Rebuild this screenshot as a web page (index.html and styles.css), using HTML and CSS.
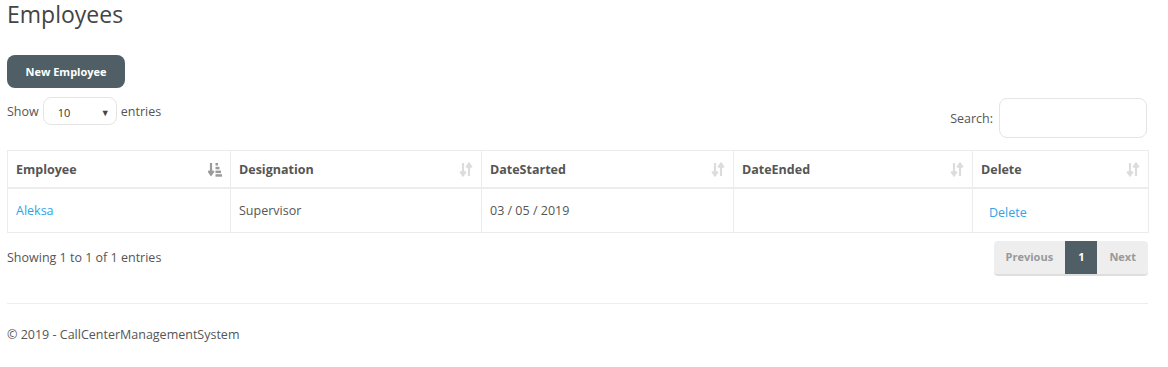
FILE: index.html
```html
<!DOCTYPE html>
<html lang="en">

<head>
    <meta charset="utf-8">
    <meta name="viewport" content="width=device-width, initial-scale=1.0">
    <title>Employees</title>
    <link rel="stylesheet" href="styles.css">
</head>

<body>
    <div class="container">
        <h2 class="title">Employees</h2>

        <p class="actions"><a class="btn" href="#">New Employee</a></p>

        <div class="toolbar">
            <label class="length">Show
                <span class="select">10 <span class="caret">&#9660;</span></span>
                entries</label>
            <label class="search">Search: <span class="input"></span></label>
        </div>

        <table class="grid">
            <thead>
                <tr>
                    <th class="c1">Employee <span class="sort on"><svg width="14" height="15" viewBox="0 0 14 15"><path d="M3 1v11M0.3 8.8L3 12.6l2.7-3.8" stroke="currentColor" stroke-width="2.2" fill="none"/><rect x="7.5" y="1" width="2.5" height="2.5"/><rect x="7.5" y="4.8" width="4" height="2.5"/><rect x="7.5" y="8.6" width="5.5" height="2.5"/><rect x="7.5" y="12.2" width="6.5" height="2.5"/></svg></span></th>
                    <th class="c2">Designation <span class="sort"><svg width="14" height="15" viewBox="0 0 14 15"><path d="M4 1v12M1.3 9.5L4 13.3l2.7-3.8M10 14V2M7.3 5.5L10 1.7l2.7 3.8" stroke="currentColor" stroke-width="2.2" fill="none"/></svg></span></th>
                    <th class="c3">DateStarted <span class="sort"><svg width="14" height="15" viewBox="0 0 14 15"><path d="M4 1v12M1.3 9.5L4 13.3l2.7-3.8M10 14V2M7.3 5.5L10 1.7l2.7 3.8" stroke="currentColor" stroke-width="2.2" fill="none"/></svg></span></th>
                    <th class="c4">DateEnded <span class="sort"><svg width="14" height="15" viewBox="0 0 14 15"><path d="M4 1v12M1.3 9.5L4 13.3l2.7-3.8M10 14V2M7.3 5.5L10 1.7l2.7 3.8" stroke="currentColor" stroke-width="2.2" fill="none"/></svg></span></th>
                    <th class="c5">Delete <span class="sort"><svg width="14" height="15" viewBox="0 0 14 15"><path d="M4 1v12M1.3 9.5L4 13.3l2.7-3.8M10 14V2M7.3 5.5L10 1.7l2.7 3.8" stroke="currentColor" stroke-width="2.2" fill="none"/></svg></span></th>
                </tr>
            </thead>
            <tbody>
                <tr>
                    <td><a href="#">Aleksa</a></td>
                    <td>Supervisor</td>
                    <td>03 / 05 / 2019</td>
                    <td></td>
                    <td class="del"><a href="#">Delete</a></td>
                </tr>
            </tbody>
        </table>

        <div class="bottom">
            <div class="info">Showing 1 to 1 of 1 entries</div>
            <ul class="pager">
                <li>Previous</li>
                <li class="active">1</li>
                <li>Next</li>
            </ul>
        </div>

        <hr>
        <footer>
            <p>&copy; 2019 - CallCenterManagementSystem</p>
        </footer>
    </div>
</body>

</html>
```

FILE: styles.css
```css
body {
    margin: 0;
    font-family: "Open Sans", "Noto Sans", sans-serif;
    font-size: 12.5px;
    color: #555;
}

.container {
    padding: 0 20px 0 7px;
}

.title {
    font-size: 23px;
    font-weight: 400;
    color: #444;
    margin: 0;
    line-height: 28px;
}

.actions {
    margin: 27px 0 9px;
}

.btn {
    display: inline-block;
    width: 118px;
    height: 33px;
    line-height: 33px;
    text-align: center;
    background: #505f66;
    color: #fff;
    font-size: 11px;
    font-weight: 700;
    border-radius: 8px;
    text-decoration: none;
}

.toolbar {
    display: flex;
    justify-content: space-between;
    align-items: flex-start;
    height: 53px;
}

.length {
    display: flex;
    align-items: center;
    gap: 4px;
}

.select {
    display: inline-flex;
    justify-content: space-between;
    align-items: center;
    width: 52px;
    height: 24px;
    padding: 2px 6px 0 14px;
    border: 1px solid #e4e4e4;
    border-radius: 8px;
    font-size: 11px;
    color: #333;
}

.caret {
    font-size: 9px;
    color: #444;
}

.search {
    display: flex;
    align-items: center;
    gap: 6px;
    margin-top: 1px;
    margin-right: 1px;
}

.input {
    display: inline-block;
    width: 146px;
    height: 38px;
    border: 1px solid #e4e4e4;
    border-radius: 8px;
}

.grid {
    width: 1142px;
    border-collapse: collapse;
    border: 1px solid #ececec;
}

.grid th,
.grid td {
    border: 1px solid #ececec;
    padding: 0 8px;
    text-align: left;
}

.grid th {
    height: 36px;
    font-weight: 700;
    color: #555;
    border-bottom: 2px solid #ececec;
    position: relative;
}

.grid td {
    height: 40px;
    color: #555;
}

.c1 { width: 206px; }
.c2 { width: 234px; }
.c3 { width: 235px; }
.c4 { width: 222px; }

.sort {
    position: absolute;
    right: 8px;
    top: 11px;
    color: #dcdcdc;
}

.sort.on {
    color: #9a9a9a;
}

.sort svg {
    display: block;
    fill: currentColor;
}

.grid a {
    color: #2fa4e7;
    text-decoration: none;
}

.del {
    padding-left: 16px !important;
    padding-top: 3px !important;
}

.bottom {
    display: flex;
    justify-content: space-between;
    align-items: center;
    margin-top: 8px;
    width: 1141px;
}

.pager {
    display: flex;
    list-style: none;
    margin: 0;
    padding: 0;
    border-radius: 4px;
    overflow: hidden;
    box-shadow: 0 2px 0 #dedede;
}

.pager li {
    height: 33px;
    line-height: 32px;
    padding: 0 12px;
    background: #eee;
    color: #999;
    font-size: 11px;
    font-weight: 700;
}

.pager .active {
    background: #505f66;
    color: #fff;
    padding: 0 13px;
}

hr {
    border: 0;
    border-top: 1px solid #eee;
    margin: 29px 0 0;
}

footer p {
    margin: 22px 0 0;
}
```
